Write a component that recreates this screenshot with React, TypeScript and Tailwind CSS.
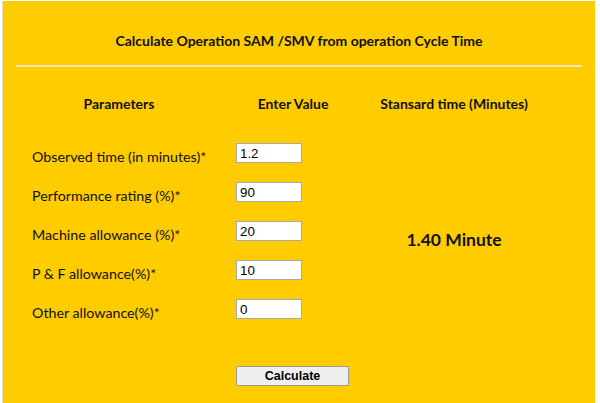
import { useState } from 'react';

const rows = [
  { label: 'Observed time (in minutes)*', value: '1.2' },
  { label: 'Performance rating (%)*', value: '90' },
  { label: 'Machine allowance (%)*', value: '20' },
  { label: 'P & F allowance(%)*', value: '10' },
  { label: 'Other allowance(%)*', value: '0' },
];

export default function App() {
  const [values, setValues] = useState(rows.map(r => r.value));

  return (
    <div className="w-[600px] h-[403px] bg-white pl-[2px] pt-[1px] pr-[5px] overflow-hidden">
      <div
        className="h-full bg-[#ffcc00] border-l border-[#e6dcc0] text-[#111] flex flex-col"
        style={{ fontFamily: 'Lato, "Open Sans", sans-serif' }}
      >
        <h1 className="pt-[32px] text-center text-[14px] leading-[16px] font-bold">
          Calculate Operation SAM /SMV from operation Cycle Time
        </h1>
        <div className="mt-[16px] mx-[13px] h-[2px] bg-[#f1e7c2]" />

        <div className="mt-[29px] flex text-[14px] leading-[16px] font-bold">
          <div className="w-[232px] text-center">Parameters</div>
          <div className="w-[116px] text-center">Enter Value</div>
          <div className="w-[206px] text-center">Stansard time (Minutes)</div>
        </div>

        <div className="mt-[31px] flex">
          <div className="pl-[29px] flex flex-col">
            {rows.map((r, i) => (
              <div key={r.label} className="h-[39px] flex items-start">
                <label className="w-[204px] mt-[4px] text-[14.25px] leading-[20px]">{r.label}</label>
                <input
                  value={values[i]}
                  onChange={e => setValues(values.map((v, j) => (j === i ? e.target.value : v)))}
                  className="w-[66px] h-[20px] bg-white border border-[#a9a9a9] px-[3px] text-[13.33px] text-black outline-none"
                  style={{ fontFamily: '"Liberation Sans", Arial, sans-serif' }}
                />
              </div>
            ))}
          </div>
          <div className="ml-[62px] w-[180px] flex items-center justify-center">
            <span className="text-[17.5px] font-bold">1.40 Minute</span>
          </div>
        </div>

        <button
          className="mt-[28px] ml-[233px] w-[113px] h-[20px] bg-[#efefef] border border-[#9a9a9a] rounded-[2px] text-[12.5px] font-bold text-black"
          style={{ fontFamily: '"Liberation Sans", Arial, sans-serif' }}
        >
          Calculate
        </button>
      </div>
    </div>
  );
}
